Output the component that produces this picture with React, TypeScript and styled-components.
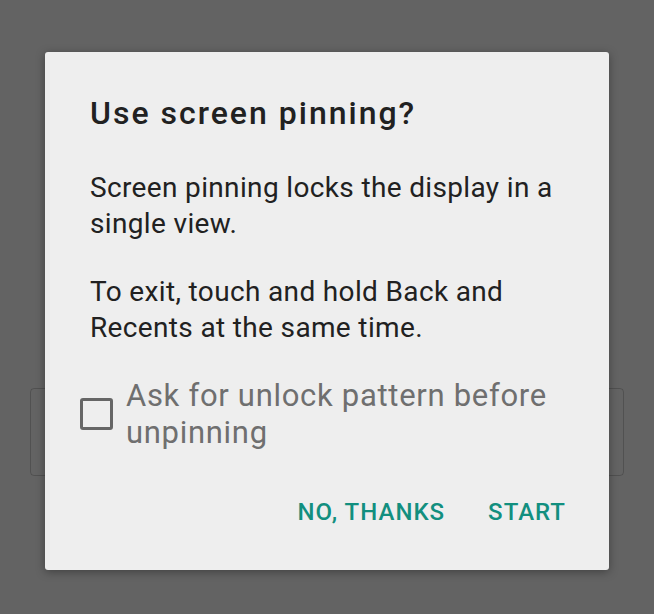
import React from "react";
import styled, { createGlobalStyle } from "styled-components";

const Global = createGlobalStyle`
  html, body { margin: 0; padding: 0; }
  body {
    background: #636363;
    font-family: Roboto, "Noto Sans", "Liberation Sans", sans-serif;
    width: 654px;
    height: 614px;
    overflow: hidden;
  }
`;

const Screen = styled.div`
  position: relative;
  width: 654px;
  height: 614px;
  padding: 388px 30px 0;
  box-sizing: border-box;
`;

const UnderCard = styled.div`
  height: 86px;
  border: 1px solid rgba(0, 0, 0, 0.18);
  border-radius: 4px;
`;

const Dialog = styled.div`
  position: absolute;
  left: 45px;
  top: 52px;
  width: 564px;
  height: 518px;
  box-sizing: border-box;
  background: #eeeeee;
  border-radius: 3px;
  box-shadow: 0 2px 10px rgba(0, 0, 0, 0.35);
  padding: 43px 45px 0;
  display: flex;
  flex-direction: column;
`;

const Title = styled.h2`
  margin: 0;
  font-size: 32px;
  line-height: 36px;
  font-weight: 500;
  letter-spacing: 2px;
  color: #212121;
`;

const Body = styled.div`
  margin-top: 39px;
  display: flex;
  flex-direction: column;
  gap: 33px;
`;

const Para = styled.p`
  margin: 0;
  font-size: 28px;
  line-height: 35.5px;
  letter-spacing: 0.35px;
  color: #212121;
`;

const CheckRow = styled.label`
  margin-top: 32px;
  margin-left: -10px;
  display: flex;
  align-items: center;
  gap: 13px;
`;

const Box = styled.span`
  flex: none;
  width: 33px;
  height: 32px;
  box-sizing: border-box;
  border: 3px solid #666666;
  border-radius: 3px;
`;

const CheckText = styled.span`
  font-size: 31px;
  line-height: 37px;
  letter-spacing: 0.7px;
  color: #6f6f6f;
`;

const Actions = styled.div`
  margin-top: 47px;
  margin-right: -2px;
  display: flex;
  justify-content: flex-end;
  gap: 43px;
`;

const ActionButton = styled.button`
  border: none;
  background: none;
  padding: 0;
  font-family: inherit;
  font-size: 24px;
  line-height: 28px;
  font-weight: 500;
  letter-spacing: 1px;
  color: #128f7f;
`;

export default function App() {
  return (
    <>
      <Global />
      <Screen>
        <UnderCard />
        <Dialog>
          <Title>Use screen pinning?</Title>
          <Body>
            <Para>Screen pinning locks the display in a single view.</Para>
            <Para>To exit, touch and hold Back and Recents at the same time.</Para>
          </Body>
          <CheckRow>
            <Box />
            <CheckText>Ask for unlock pattern before unpinning</CheckText>
          </CheckRow>
          <Actions>
            <ActionButton>NO, THANKS</ActionButton>
            <ActionButton>START</ActionButton>
          </Actions>
        </Dialog>
      </Screen>
    </>
  );
}
